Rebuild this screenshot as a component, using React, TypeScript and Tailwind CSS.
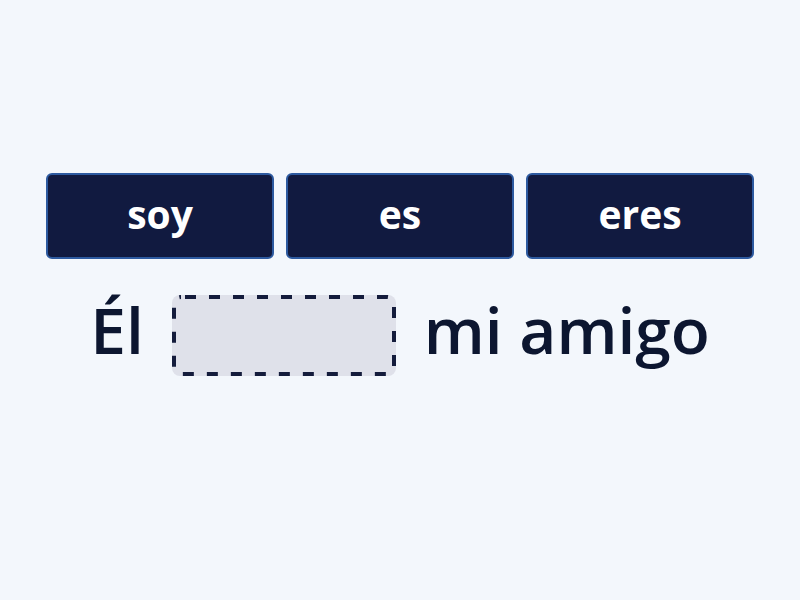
const WORDS = ["soy", "es", "eres"];

export default function App() {
  return (
    <div
      className="w-[800px] h-[600px] bg-[#f3f7fc] flex flex-col items-center pt-[173px]"
      style={{ fontFamily: '"Open Sans", sans-serif' }}
    >
      {/* Answer tiles */}
      <div className="flex gap-3 px-[46px] w-full">
        {WORDS.map((w) => (
          <div
            key={w}
            className="flex-1 h-[86px] rounded-md border-2 border-[#2d5aa0] bg-[#111a40] flex items-center justify-center pb-[5px] text-white text-[39px] font-bold leading-none"
          >
            {w}
          </div>
        ))}
      </div>

      {/* Sentence */}
      <div className="flex items-center mt-[36px] text-[#0c1630] text-[64px] font-semibold leading-none">
        <span className="pb-[12px]">Él</span>
        <div className="relative w-[224px] h-[81px] mx-[28px] rounded-lg bg-[#dfe1ea]">
          <svg className="absolute inset-0" width="224" height="81">
            <rect
              x="2"
              y="2"
              width="220"
              height="77"
              rx="7"
              fill="none"
              stroke="#141c3c"
              strokeWidth="4"
              strokeDasharray="11 13"
              strokeDashoffset="-4"
            />
          </svg>
        </div>
        <span className="pb-[12px]">mi amigo</span>
      </div>
    </div>
  );
}
